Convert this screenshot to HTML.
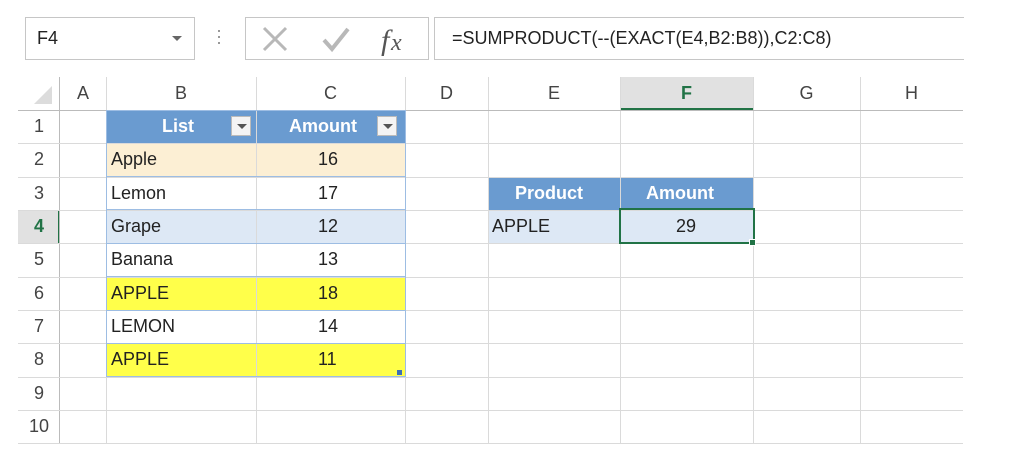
<!DOCTYPE html>
<html><head><meta charset="utf-8"><style>
body{margin:0;width:1024px;height:452px;background:#fff;position:relative;overflow:hidden;font-family:"Liberation Sans",Calibri,sans-serif;color:#222}
div{position:absolute;box-sizing:border-box}
.v{width:1px;background:#dadada;top:77px;height:366px}
.h{height:1px;background:#dadada;left:18px;width:945px}
.t{font-size:18px;line-height:33px;white-space:nowrap}
.ch{top:77px;height:33px;font-size:18px;line-height:33px;text-align:center;color:#444}
.rh{left:18px;width:42px;font-size:18px;line-height:33px;text-align:center;color:#444}
.dd{width:20px;height:20px;background:#f4f4f4;border:1px solid #bbb}
.dd:after{content:"";position:absolute;left:5px;top:7px;border-left:5px solid transparent;border-right:5px solid transparent;border-top:5px solid #555}
</style></head><body>
<div style="left:25px;top:17px;width:170px;height:43px;border:1px solid #c6c6c6"></div>
<div class="t" style="left:37px;top:22px;font-size:18px">F4</div>
<div style="left:172px;top:36px;border-left:5px solid transparent;border-right:5px solid transparent;border-top:5px solid #666"></div>
<div style="left:218px;top:30px;width:2px;height:2px;background:#999;box-shadow:0 6px #999,0 12px #999"></div>
<div style="left:245px;top:17px;width:184px;height:43px;border:1px solid #c6c6c6"></div>
<svg style="position:absolute;left:260px;top:24px" width="160" height="32"><path d="M4 4L26 26M26 4L4 26" stroke="#b8b8b8" stroke-width="3"/><path d="M64 16l8 9 16-20" stroke="#b8b8b8" stroke-width="4" fill="none"/><text x="121" y="26" font-family="Liberation Serif" font-style="italic" font-size="30" fill="#555">f</text><text x="131" y="26" font-family="Liberation Serif" font-style="italic" font-size="24" fill="#555">x</text></svg>
<div style="left:434px;top:17px;width:530px;height:43px;border:1px solid #c6c6c6;border-right:none"></div>
<div class="t" style="left:452px;top:22px;font-size:18px">=SUMPRODUCT(--(EXACT(E4,B2:B8)),C2:C8)</div>
<div style="left:620px;top:77px;width:133px;height:33px;background:#e1e1e1;border-bottom:2px solid #217346"></div>
<div style="left:18px;top:210px;width:42px;height:33px;background:#e1e1e1;border-right:2px solid #217346"></div>
<div style="left:34px;top:86px;width:0;height:0;border-left:18px solid transparent;border-bottom:18px solid #dcdcdc"></div>
<div style="left:106px;top:110px;width:299px;height:33px;background:#6a9bd0"></div>
<div style="left:106px;top:143px;width:299px;height:34px;background:#fcefd4"></div>
<div style="left:106px;top:210px;width:299px;height:33px;background:#dde8f5"></div>
<div style="left:106px;top:277px;width:299px;height:33px;background:#ffff4a"></div>
<div style="left:106px;top:343px;width:299px;height:34px;background:#ffff4a"></div>
<div style="left:488px;top:177px;width:265px;height:33px;background:#6a9bd0"></div>
<div style="left:488px;top:210px;width:265px;height:33px;background:#dde8f5"></div>
<div class="v" style="left:59px;background:#bbb"></div>
<div class="v" style="left:106px"></div><div class="v" style="left:256px"></div><div class="v" style="left:405px"></div>
<div class="v" style="left:488px"></div><div class="v" style="left:620px"></div><div class="v" style="left:753px"></div>
<div class="v" style="left:860px"></div>
<div class="h" style="top:110px;background:#bbb"></div>
<div class="h" style="top:143px"></div><div class="h" style="top:177px"></div><div class="h" style="top:210px"></div>
<div class="h" style="top:243px"></div><div class="h" style="top:277px"></div><div class="h" style="top:310px"></div>
<div class="h" style="top:343px"></div><div class="h" style="top:377px"></div><div class="h" style="top:410px"></div>
<div class="h" style="top:443px"></div>
<div style="left:106px;top:110px;width:300px;height:267px;border:1px solid #9dbde3"></div>
<div style="left:106px;top:176px;width:300px;height:1px;background:#9dbde3"></div>
<div style="left:106px;top:209px;width:300px;height:1px;background:#9dbde3"></div>
<div style="left:106px;top:243px;width:300px;height:1px;background:#9dbde3"></div>
<div style="left:106px;top:276px;width:300px;height:1px;background:#9dbde3"></div>
<div style="left:106px;top:310px;width:300px;height:1px;background:#9dbde3"></div>
<div style="left:106px;top:343px;width:300px;height:1px;background:#9dbde3"></div>
<div style="left:397px;top:370px;width:5px;height:5px;background:#3d6fb5"></div>
<div class="ch" style="left:60px;width:46px">A</div><div class="ch" style="left:106px;width:150px">B</div>
<div class="ch" style="left:256px;width:149px">C</div><div class="ch" style="left:405px;width:83px">D</div>
<div class="ch" style="left:488px;width:132px">E</div><div class="ch" style="left:620px;width:133px;color:#217346;font-weight:bold">F</div>
<div class="ch" style="left:753px;width:107px">G</div><div class="ch" style="left:860px;width:103px">H</div>
<div class="rh" style="top:110px">1</div><div class="rh" style="top:143px">2</div><div class="rh" style="top:177px">3</div>
<div class="rh" style="top:210px;color:#217346;font-weight:bold">4</div><div class="rh" style="top:243px">5</div>
<div class="rh" style="top:277px">6</div><div class="rh" style="top:310px">7</div><div class="rh" style="top:343px">8</div>
<div class="rh" style="top:377px">9</div><div class="rh" style="top:410px">10</div>
<div class="t" style="left:162px;top:110px;color:#fff;font-weight:bold">List</div>
<div class="dd" style="left:231px;top:116px"></div>
<div class="t" style="left:289px;top:110px;color:#fff;font-weight:bold">Amount</div>
<div class="dd" style="left:377px;top:116px"></div>
<div class="t" style="left:111px;top:143px">Apple</div><div class="t" style="left:318px;top:143px">16</div>
<div class="t" style="left:111px;top:177px">Lemon</div><div class="t" style="left:318px;top:177px">17</div>
<div class="t" style="left:111px;top:210px">Grape</div><div class="t" style="left:318px;top:210px">12</div>
<div class="t" style="left:111px;top:243px">Banana</div><div class="t" style="left:318px;top:243px">13</div>
<div class="t" style="left:111px;top:277px">APPLE</div><div class="t" style="left:318px;top:277px">18</div>
<div class="t" style="left:111px;top:310px">LEMON</div><div class="t" style="left:318px;top:310px">14</div>
<div class="t" style="left:111px;top:343px">APPLE</div><div class="t" style="left:318px;top:343px">11</div>
<div class="t" style="left:515px;top:177px;color:#fff;font-weight:bold">Product</div>
<div class="t" style="left:646px;top:177px;color:#fff;font-weight:bold">Amount</div>
<div class="t" style="left:492px;top:210px">APPLE</div>
<div style="left:619px;top:208px;width:136px;height:36px;border:2px solid #217346"></div>
<div style="left:749px;top:239px;width:7px;height:7px;background:#217346;border:1px solid #fff"></div>
<div class="t" style="left:676px;top:210px">29</div>
</body></html>
